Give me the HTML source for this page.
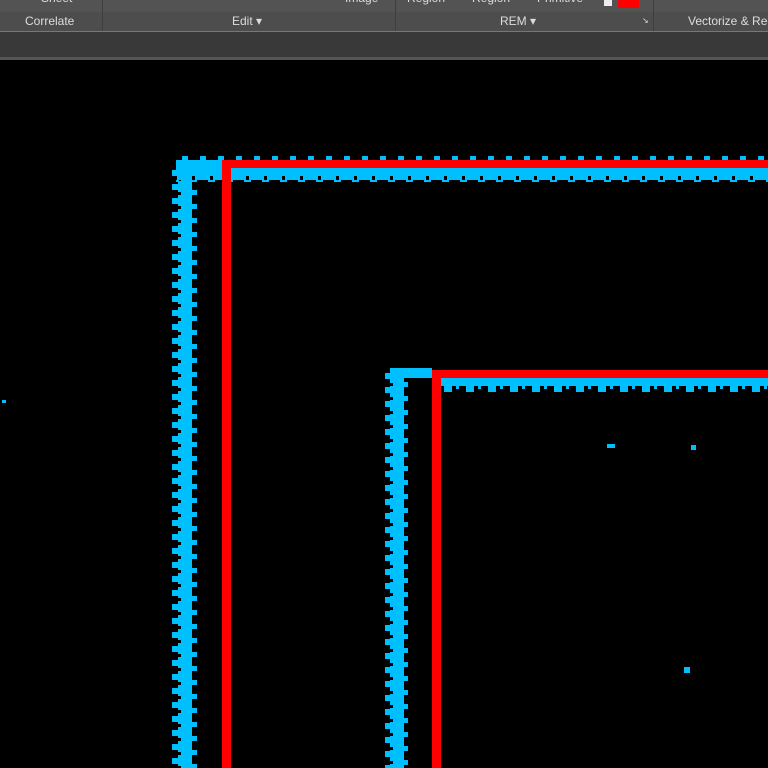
<!DOCTYPE html>
<html><head><style>
html,body{margin:0;padding:0;width:768px;height:768px;overflow:hidden;background:#000;font-family:"Liberation Sans",sans-serif}
.tb{position:absolute;left:0;top:0;width:768px;height:31px;background:#535353}
.tb .t{position:absolute;color:#ddd;font-size:12px;white-space:nowrap}
.band{position:absolute;left:0;top:31px;width:768px;height:26px;background:#393939;border-top:1px solid #777}
.bot{position:absolute;left:0;top:57px;width:768px;height:3px;background:#555}
.sep{position:absolute;top:0;width:1px;height:31px;background:#3e3e3e}
</style></head><body>
<div class="tb">
<div style="position:absolute;left:0;top:12px;width:768px;height:19px;background:#4d4d4d"></div>
<span class="t" style="left:41px;top:-9px">Sheet</span>
<span class="t" style="left:345px;top:-9px">Image</span>
<span class="t" style="left:407px;top:-9px">Region</span>
<span class="t" style="left:472px;top:-9px">Region</span>
<span class="t" style="left:537px;top:-9px">Primitive</span>
<div style="position:absolute;left:604px;top:0;width:8px;height:6px;background:#eee"></div>
<div style="position:absolute;left:618px;top:0;width:21px;height:8px;background:#f00"></div>
<span class="t" style="left:25px;top:14px">Correlate</span>
<span class="t" style="left:232px;top:14px">Edit ▾</span>
<span class="t" style="left:500px;top:14px">REM ▾</span>
<span class="t" style="left:642px;top:16px;font-size:8px">↘</span>
<span class="t" style="left:688px;top:14px">Vectorize &amp; Rec</span>
<div class="sep" style="left:102px"></div>
<div class="sep" style="left:395px"></div>
<div class="sep" style="left:653px"></div>
</div>
<div class="band"></div>
<div class="bot"></div>
<svg style="position:absolute;left:0;top:0" width="768" height="768">
<defs>
<pattern id="pv" width="26" height="14" patternUnits="userSpaceOnUse" patternTransform="translate(172,0)">
<rect x="6" y="0" width="14" height="14" fill="#00bfff"/>
<rect x="0" y="2" width="6" height="6" fill="#00bfff"/>
<rect x="20" y="8" width="5" height="5" fill="#00bfff"/>
<rect x="6" y="10" width="3" height="3" fill="#000"/>
</pattern>
<pattern id="pv2" width="26" height="14" patternUnits="userSpaceOnUse" patternTransform="translate(385,3)">
<rect x="5" y="0" width="14" height="14" fill="#00bfff"/>
<rect x="0" y="6" width="5" height="6" fill="#00bfff"/>
<rect x="19" y="1" width="4" height="5" fill="#00bfff"/>
<rect x="5" y="2" width="3" height="3" fill="#000"/>
</pattern>
<pattern id="ph" width="18" height="26" patternUnits="userSpaceOnUse" patternTransform="translate(0,156)">
<rect x="0" y="4" width="18" height="20" fill="#00bfff"/>
<rect x="2" y="0" width="6" height="4" fill="#00bfff"/>
<rect x="10" y="24" width="7" height="2" fill="#00bfff"/>
<rect x="12" y="20" width="3" height="4" fill="#000"/>
</pattern>
<pattern id="ph2" width="22" height="16" patternUnits="userSpaceOnUse" patternTransform="translate(0,377)">
<rect x="0" y="0" width="22" height="9" fill="#00bfff"/>
<rect x="4" y="9" width="8" height="6" fill="#00bfff"/>
<rect x="16" y="9" width="3" height="3" fill="#00bfff"/>
</pattern>
</defs>
<rect x="172" y="162" width="26" height="606" fill="url(#pv)"/>
<rect x="176" y="156" width="50" height="26" fill="url(#ph)"/>
<rect x="196" y="156" width="572" height="26" fill="url(#ph)"/>
<rect x="385" y="372" width="24" height="396" fill="url(#pv2)"/>
<rect x="390" y="368" width="42" height="10" fill="#00bfff"/>
<rect x="440" y="377" width="328" height="16" fill="url(#ph2)"/>
<rect x="222" y="160" width="546" height="8" fill="#f00"/>
<rect x="222" y="160" width="9" height="608" fill="#f00"/>
<rect x="432" y="370" width="336" height="8" fill="#f00"/>
<rect x="432" y="370" width="9" height="398" fill="#f00"/>
<rect x="2" y="400" width="4" height="3" fill="#00bfff"/>
<rect x="607" y="444" width="8" height="4" fill="#00bfff"/>
<rect x="691" y="445" width="5" height="5" fill="#00bfff"/>
<rect x="684" y="667" width="6" height="6" fill="#00bfff"/>
</svg>
</body></html>
